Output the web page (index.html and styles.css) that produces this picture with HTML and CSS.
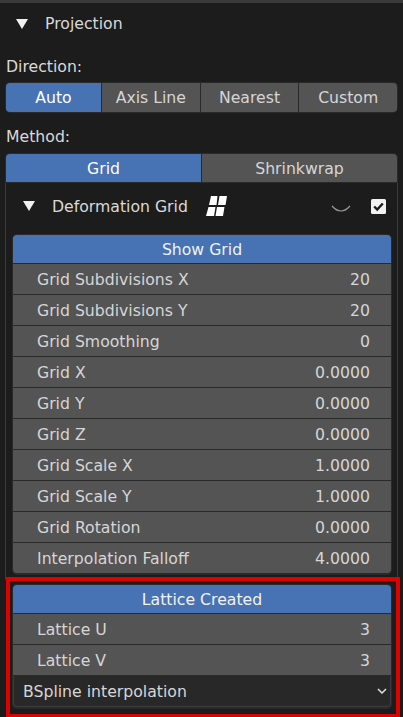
FILE: index.html
```html
<!DOCTYPE html>
<html lang="en">
<head>
<meta charset="utf-8">
<title>Projection</title>
<link rel="stylesheet" href="styles.css">
</head>
<body>
<div class="panel">
  <div class="head">
    <svg class="tri" viewBox="0 0 12 10"><path d="M0 0H12L6 10Z"/></svg>
    <span>Projection</span>
  </div>

  <div class="label label-dir">Direction:</div>
  <div class="seg seg-dir">
    <div class="on">Auto</div><div>Axis Line</div><div>Nearest</div><div>Custom</div>
  </div>

  <div class="label label-method">Method:</div>
  <div class="seg seg-method">
    <div class="on">Grid</div><div>Shrinkwrap</div>
  </div>

  <div class="box">
    <div class="subhead">
      <svg class="tri" viewBox="0 0 12 10"><path d="M0 0H12L6 10Z"/></svg>
      <span>Deformation Grid</span>
      <svg class="grid-icon" viewBox="0 0 21 20"><path d="M5 0H11.500L10.500 9H3ZM13.500 0H21L19.500 9H12ZM2.500 11H9.500L8 20H0ZM11 11H18.500L17 20H9.500Z"/></svg>
      <svg class="eye" viewBox="0 0 20 8"><path d="M1 1Q10 11 19 1"/></svg>
      <svg class="check" viewBox="0 0 15 15"><rect width="15" height="15" rx="1.500"/><path d="M3.200 7.500L6.200 10.500L11.800 4.500"/></svg>
    </div>

    <div class="list">
      <div class="bar">Show Grid</div>
      <div class="row"><span>Grid Subdivisions X</span><span>20</span></div>
      <div class="row"><span>Grid Subdivisions Y</span><span>20</span></div>
      <div class="row"><span>Grid Smoothing</span><span>0</span></div>
      <div class="row"><span>Grid X</span><span>0.0000</span></div>
      <div class="row"><span>Grid Y</span><span>0.0000</span></div>
      <div class="row"><span>Grid Z</span><span>0.0000</span></div>
      <div class="row"><span>Grid Scale X</span><span>1.0000</span></div>
      <div class="row"><span>Grid Scale Y</span><span>1.0000</span></div>
      <div class="row"><span>Grid Rotation</span><span>0.0000</span></div>
      <div class="row"><span>Interpolation Falloff</span><span>4.0000</span></div>
    </div>
  </div>

  <div class="red">
    <div class="list">
      <div class="bar">Lattice Created</div>
      <div class="row"><span>Lattice U</span><span>3</span></div>
      <div class="row"><span>Lattice V</span><span>3</span></div>
      <div class="select">
        <span>BSpline interpolation</span>
        <svg class="chev" viewBox="0 0 10 6"><path d="M1 1L5 5L9 1"/></svg>
      </div>
    </div>
  </div>
</div>
</body>
</html>
```

FILE: styles.css
```css
*{box-sizing:border-box}
html,body{height:100%}
body{margin:0;background:#1c1c1c;color:#d9d9d9;font-family:"DejaVu Sans",sans-serif;font-size:15.7px;overflow:hidden}
.panel{height:717px;border-top:3px solid #3a3a3a}

.head{display:flex;align-items:center;height:41px;padding-left:16px}
.head span{margin-left:17px}
.tri{width:12px;height:10px;flex:none}
.tri path{fill:#f0f0f0}

.label{padding-left:6px;height:20px;line-height:20px}
.label-dir{margin-top:13px}
.label-method{margin-top:14px}

.seg{display:flex;margin:0 5px;gap:1px;background:#2a2a2a;padding:1px;border-radius:5px;height:31px}
.seg div{flex:1;display:flex;align-items:center;justify-content:center;background:#545454;color:#d6d6d6}
.seg div:first-child{border-radius:4px 0 0 4px}
.seg div:last-child{border-radius:0 4px 4px 0}
.seg .on{background:#4772b3;color:#fff}
.seg-dir{margin-top:5px}
.seg-dir .on{flex:0 0 95px}
.seg-method{margin-top:6px;border-radius:5px 5px 0 0;height:30px}
.seg-method div:first-child{border-radius:4px 0 0 0}
.seg-method div:last-child{border-radius:0 4px 0 0}

.box{margin:0 5px;padding:0 5px 0 6px;border:solid #3a3a3a;border-width:0 1px;height:397px}
.subhead{display:flex;align-items:center;height:46px;margin-bottom:5px;padding-left:11px}
.subhead span{margin-left:17px}
.grid-icon{width:21px;height:20px;margin-left:18px;fill:#fff}
.eye{width:20px;height:8px;margin-top:6px;margin-left:auto;margin-right:20px;fill:none;stroke:#9a9a9a;stroke-width:1.2}
.check{width:15px;height:15px;margin-right:6px}
.check rect{fill:#f2f2f2}
.check path{fill:none;stroke:#1a1a1a;stroke-width:2.400}

.list{background:#2a2a2a;border-radius:5px;padding:1px 1px 2px}
.bar{height:28px;display:flex;align-items:center;justify-content:center;background:#4772b3;color:#f2f2f2;border-radius:4px 4px 0 0}
.row{height:30px;margin-top:1px;display:flex;align-items:center;justify-content:space-between;padding:0 21px 0 24px;background:#545454;color:#d6d6d6}
.row:last-child{border-radius:0 0 4px 4px}

.red{margin:0 3px 0 6px;height:141px;border:4px solid #e00000;padding:3px 4px 0 2px;position:relative;top:-3px}
.select{height:31px;margin-top:1px;display:flex;align-items:center;justify-content:space-between;padding:0 3px 0 9px;background:#282828;color:#d6d6d6;border:solid #3c3c3c;border-width:0 1px 1px;border-radius:0 0 4px 4px}
.chev{width:10px;height:6px;fill:none;stroke:#e0e0e0;stroke-width:1.500}
```
